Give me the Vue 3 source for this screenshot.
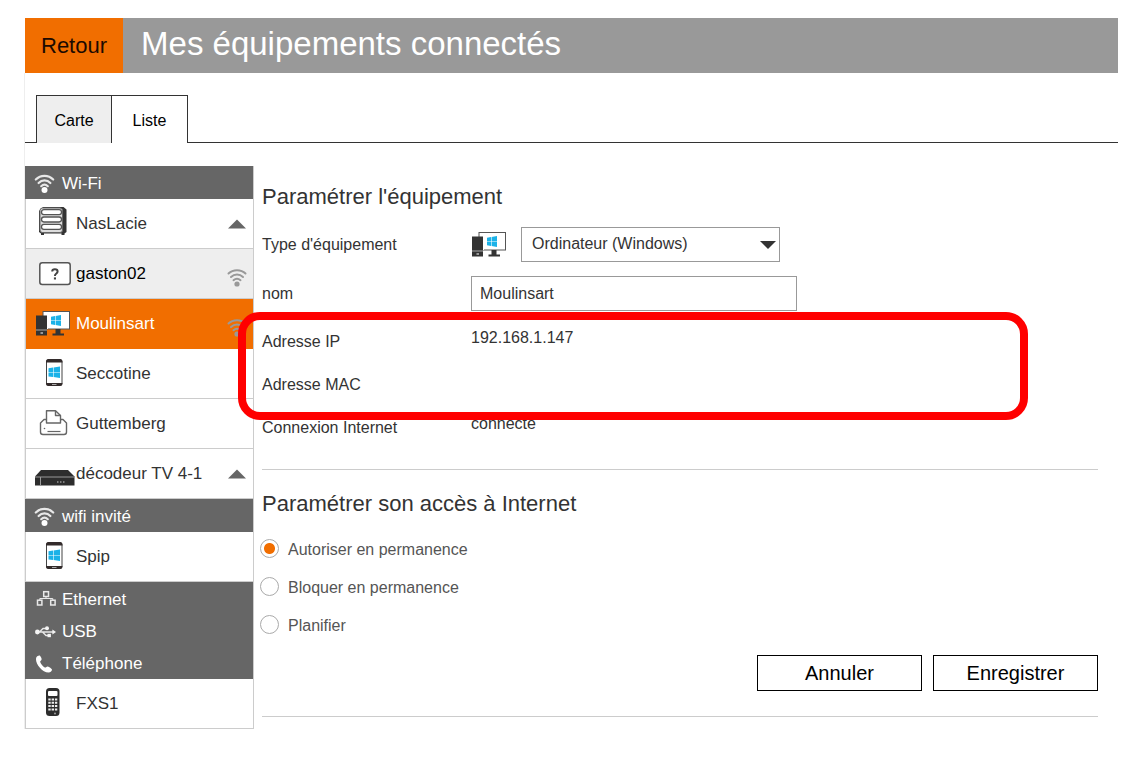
<script setup>
import { ref } from 'vue'

const groups = [
  { label: 'Wi-Fi', icon: 'wifi', items: [
    { name: 'NasLacie', icon: 'nas', trail: 'up' },
    { name: 'gaston02', icon: 'unknown', trail: 'signal', shaded: true },
    { name: 'Moulinsart', icon: 'desktop', trail: 'signal', selected: true },
    { name: 'Seccotine', icon: 'mobile' },
    { name: 'Guttemberg', icon: 'printer' },
    { name: 'décodeur TV 4-1', icon: 'decoder', trail: 'up' },
  ] },
  { label: 'wifi invité', icon: 'wifi', items: [{ name: 'Spip', icon: 'mobile' }] },
  { label: 'Ethernet', icon: 'ethernet', items: [] },
  { label: 'USB', icon: 'usb', items: [] },
  { label: 'Téléphone', icon: 'handset', items: [{ name: 'FXS1', icon: 'cordless' }] },
]

const rows = groups.flatMap((g) => [{ section: true, name: g.label, icon: g.icon }, ...g.items])

const accessModes = ['Autoriser en permanence', 'Bloquer en permanence', 'Planifier']
const access = ref(accessModes[0])
const deviceName = ref('Moulinsart')
const deviceType = ref('windows')
</script>

<template>
  <div class="page">
    <svg class="defs" width="0" height="0" aria-hidden="true">
      <symbol id="wifi" viewBox="0 0 22 20">
        <g fill="none" stroke="#e8e8e8" stroke-width="2.2" stroke-linecap="round">
          <path d="M1.8 5.5C6.6 0.6 14.4 0.6 19.2 5.5" />
          <path d="M4.6 9C8 5.4 13 5.4 16.4 9" />
          <path d="M7.2 12.2C9.2 10.2 11.8 10.2 13.8 12.2" />
        </g>
        <circle cx="10.5" cy="16" r="3" fill="#fff" />
      </symbol>
      <symbol id="ethernet" viewBox="0 0 22 20">
        <g fill="none" stroke="#e8e8e8" stroke-width="1.5">
          <rect x="9.7" y="1.7" width="4.8" height="4.8" />
          <rect x="3.5" y="10.2" width="4.4" height="4.8" />
          <rect x="16.7" y="10.2" width="4.4" height="4.8" />
          <path d="M12 6.5V8.500M5.800 10.200V8.500H18.800V10.200" stroke-width="1" />
        </g>
      </symbol>
      <symbol id="usb" viewBox="0 0 22 20">
        <g fill="none" stroke="#e8e8e8" stroke-width="1.4">
          <path d="M3 10H19M5.5 10L9 6.5H12M8.5 10L12 13.5H14.5" />
        </g>
        <g fill="#f4f4f4">
          <circle cx="3.4" cy="10" r="2.4" />
          <circle cx="13" cy="6.3" r="2" />
          <rect x="13.5" y="11.8" width="3.4" height="3.4" />
          <path d="M18.4 7.600L22 10L18.4 12.400Z" />
        </g>
      </symbol>
      <symbol id="handset" viewBox="0 0 22 20">
        <path fill="#fff" d="M2.4 3.2C3.4 1.8 5 1 5.8 1.6C6.8 2.6 7.8 4.6 7.6 5.6C7.4 6.6 6 7 6.2 8C6.8 10 8.8 12.4 10.8 13.4C12 13.8 12.6 12.2 13.8 12.4C15.2 12.6 17.6 14.4 18 15.4C18.2 16.6 16.4 18.4 14.6 18.6C8.4 18.4 1.8 10.4 2 5.2C2 4.4 2.1 3.7 2.4 3.2Z" />
      </symbol>
      <symbol id="nas" viewBox="0 0 40 36">
        <path fill="#333" d="M8 1H28.5L31.5 3.5V26L29.5 27.5V29H26.5V27.5H9V29H6V27.5L4 26V5Z" />
        <rect x="5" y="2" width="22.5" height="24.5" rx="2.5" fill="#ddd" stroke="#666" />
        <g fill="#fff" stroke="#555" stroke-width="1.3">
          <rect x="6.5" y="3.6" width="20" height="5" rx="2.4" />
          <rect x="6.5" y="11" width="20" height="5" rx="2.4" />
          <rect x="6.5" y="18.4" width="20" height="5" rx="2.4" />
        </g>
      </symbol>
      <symbol id="unknown" viewBox="0 0 40 36">
        <rect x="4.8" y="6.8" width="30.4" height="21.6" rx="2.5" fill="#fff" stroke="#555" stroke-width="1.5" />
        <path d="M17.2 15.6C17.2 12.6 22.6 12.6 22.6 15.6C22.6 17.6 19.9 17.4 19.9 20" fill="none" stroke="#444" stroke-width="2" />
        <rect x="18.9" y="21.4" width="2.1" height="2.1" fill="#444" />
      </symbol>
      <symbol id="desktop" viewBox="0 0 40 36">
        <rect x="8" y="5.5" width="26.5" height="17.5" fill="#fff" stroke="#555" />
        <path d="M20.5 23H25.5V27.5H29V29.5H17.5V27.5H20.5Z" fill="#333" />
        <rect x="1" y="9.5" width="11" height="20" fill="#333" />
        <path d="M1 24H12" stroke="#aaa" />
        <path d="M12.5 9.5V23" stroke="#fff" />
        <path d="M5.5 27H8" stroke="#bbb" stroke-width="1.5" />
        <path fill="#1bb2e8" d="M16 10.8L20 10V14H16ZM20.6 9.9L26 9V14H20.6ZM16 14.6H20V19L16 18.3ZM20.6 14.6H26V20L20.6 19.1Z" />
      </symbol>
      <symbol id="mobile" viewBox="0 0 40 36">
        <rect x="11.5" y="3.5" width="15.5" height="26" rx="2.5" fill="#fff" stroke="#444" />
        <path fill="#332b2b" d="M11 6.500V5.500Q11 3 13.500 3H25Q27.500 3 27.500 5.500V6.500ZM11 27H27.500V27.500Q27.500 30 25 30H13.500Q11 30 11 27.500Z" />
        <path d="M17 28.500H21.500" stroke="#aaa" />
        <path fill="#1bb2e8" d="M13.500 12.300L18 11.600V16H13.500ZM18.600 11.500L25 10.500V16H18.600ZM13.500 16.600H18V21L13.500 20.400ZM18.600 16.600H25V22L18.600 21.100Z" />
      </symbol>
      <symbol id="printer" viewBox="0 0 40 36">
        <g fill="#fff" stroke="#666" stroke-width="1.4" stroke-linejoin="round">
          <path d="M9 13.500H28L31.500 17V26Q31.500 28.500 29 28.500H8Q5.500 28.500 5.500 26V17Z" />
          <path d="M11.500 17V4.700H20.500L25.500 9.500V17Z" />
          <path d="M20.500 4.700V9.500H25.500" fill="none" />
          <path d="M12.500 25.500H25.500" stroke-width="1.200" />
        </g>
        <circle cx="9.500" cy="22.500" r="0.800" fill="#666" />
      </symbol>
      <symbol id="decoder" viewBox="0 0 40 36">
        <path fill="#2d2d2d" d="M6 14H33L39.500 20.500V29.500H0V20.500Z" />
        <path d="M0 21H40M5.500 21V29" stroke="#999" />
        <path d="M22 26H23.500M25 26H26.500M28 26H29.500" stroke="#ccc" />
      </symbol>
      <symbol id="cordless" viewBox="0 0 40 36">
        <rect x="11" y="2" width="13.500" height="28" rx="3.500" fill="#2d2d2d" />
        <rect x="13" y="5" width="9.500" height="5" rx="1" fill="#fff" />
        <path d="M13.300 13.500H22.300M13.300 16.800H22.300M13.300 20.100H22.300M13.300 23.400H22.300" stroke="#eee" stroke-width="2" stroke-dasharray="2.400 0.900" />
        <circle cx="20" cy="27.500" r="0.900" fill="#aaa" />
      </symbol>
      <symbol id="up" viewBox="0 0 20 30">
        <path d="M1 19.500L10 10.500L19 19.500Z" fill="#666" />
      </symbol>
      <symbol id="signal" viewBox="0 0 20 30">
        <g fill="none" stroke="#999" stroke-width="2" stroke-linecap="round">
          <path d="M1.500 14.500C6 10 14 10 18.500 14.500" />
          <path d="M4 18C7.400 14.800 12.600 14.800 16 18" />
          <path d="M6.500 21.200C8.600 19.400 11.400 19.400 13.500 21.200" />
        </g>
        <circle cx="10" cy="25" r="2.600" fill="#999" />
      </symbol>
    </svg>

    <header class="banner">
      <button type="button" class="back">Retour</button>
      <h1>Mes équipements connectés</h1>
    </header>

    <div class="body">
      <nav class="tabs">
        <a href="#carte" class="tab">Carte</a>
        <a href="#liste" class="tab active" aria-current="page">Liste</a>
      </nav>

      <div class="columns">
        <ul class="devices">
          <li v-for="row in rows" :key="row.name" :class="{ section: row.section, device: !row.section }">
            <template v-if="row.section">
              <svg class="section-icon" aria-hidden="true"><use :href="'#' + row.icon" /></svg>
              <span>{{ row.name }}</span>
            </template>
            <button v-else type="button" :class="{ shaded: row.shaded, selected: row.selected }">
              <svg class="device-icon" aria-hidden="true"><use :href="'#' + row.icon" /></svg>
              <span class="device-name">{{ row.name }}</span>
              <svg v-if="row.trail" class="trail" aria-hidden="true"><use :href="'#' + row.trail" /></svg>
            </button>
          </li>
        </ul>

        <main class="settings">
          <h2>Paramétrer l'équipement</h2>
          <div class="row tall">
            <label for="type">Type d'équipement</label>
            <div class="type">
              <svg class="device-icon" aria-hidden="true"><use href="#desktop" /></svg>
              <div class="select">
                <select id="type" v-model="deviceType">
                  <option value="windows">Ordinateur (Windows)</option>
                </select>
                <svg class="caret" viewBox="0 0 16 8" aria-hidden="true"><path d="M0 0H16L8 8Z" fill="#333" /></svg>
              </div>
            </div>
          </div>
          <div class="row tall">
            <label for="nom">nom</label>
            <input id="nom" v-model="deviceName" class="name" type="text" />
          </div>
          <div class="addresses">
            <div class="row"><span>Adresse IP</span><span class="value">192.168.1.147</span></div>
            <div class="row"><span>Adresse MAC</span></div>
            <div class="highlight"></div>
          </div>
          <div class="row"><span>Connexion Internet</span><span class="value">connecté</span></div>
          <hr />

          <h2 id="access-title">Paramétrer son accès à Internet</h2>
          <div class="modes" role="radiogroup" aria-labelledby="access-title">
            <label v-for="mode in accessModes" :key="mode" class="mode">
              <input v-model="access" type="radio" name="access" :value="mode" />
              <span>{{ mode }}</span>
            </label>
          </div>
          <div class="actions">
            <button type="button">Annuler</button>
            <button type="button">Enregistrer</button>
          </div>
          <hr class="end" />
        </main>
      </div>
    </div>
  </div>
</template>

<style>
body {
  background: #fff;
}
</style>

<style scoped>
.page {
  padding: 18px 13px 40px 24px;
  font: 16px/20px "Liberation Sans", Arial, sans-serif;
  color: #333;
}
.page *,
.page *::before,
.page *::after {
  box-sizing: border-box;
}
.defs {
  position: absolute;
}
button,
input,
select {
  font: inherit;
  color: inherit;
  margin: 0;
  border-radius: 0;
}
.banner {
  display: flex;
  height: 55px;
  margin-left: 1px;
  background: #999;
}
.back {
  padding: 0 16px;
  border: 0;
  background: #f16e00;
  color: #1c0a00;
  font-size: 22px;
}
h1 {
  margin: 0;
  padding: 0 18px 4px;
  align-self: center;
  font-size: 33px;
  line-height: 40px;
  font-weight: 400;
  color: #fff;
}
.body {
  padding-top: 22px;
  border-left: 1px solid #eee;
}
.tabs {
  display: flex;
}
.tabs::before,
.tabs::after {
  content: "";
  width: 11px;
  border-bottom: 1px solid #333;
}
.tabs::after {
  flex: 1;
}
.tab {
  width: 75px;
  height: 48px;
  padding-top: 2px;
  border: 1px solid #333;
  border-width: 1px 0 0 1px;
  background: #eee;
  color: #000;
  line-height: 46px;
  text-align: center;
  text-decoration: none;
}
.tab.active {
  width: 77px;
  border-right-width: 1px;
  background: #fff;
}
.columns {
  display: flex;
  align-items: flex-start;
  padding-top: 23px;
}
.devices {
  flex: none;
  width: 229px;
  margin: 0;
  padding: 0;
  border: 1px solid #ccc;
  border-width: 0 1px 0 0;
  list-style: none;
  font-size: 17px;
}
.section {
  display: flex;
  align-items: center;
  gap: 6px;
  height: 33px;
  padding: 2px 0 0 9px;
  background: #666;
  color: #fff;
}
.section + .section {
  height: 32px;
}
.section-icon {
  width: 22px;
  height: 20px;
}
.device {
  height: 50px;
  border: 1px solid #ccc;
  border-width: 0 0 1px 1px;
}
.device button {
  display: flex;
  align-items: center;
  gap: 1px;
  width: 100%;
  height: 49px;
  padding: 0 6px 0 9px;
  border: 0;
  background: #fff;
  text-align: left;
}
.device button.shaded {
  background: #eee;
  color: #000;
}
.device button.selected {
  height: 50px;
  background: #f16e00;
  color: #fff;
}
.device-icon {
  flex: none;
  width: 40px;
  height: 36px;
}
.device-name {
  flex: 1;
}
.trail {
  width: 20px;
  height: 30px;
}
.settings {
  flex: 1;
  min-width: 0;
  padding: 17px 20px 0 8px;
}
h2 {
  margin: 0 0 9px;
  font-size: 22px;
  line-height: 28px;
  font-weight: 400;
  color: #333;
}
.row {
  display: grid;
  grid-template-columns: 209px 1fr;
  align-items: center;
  height: 43px;
}
.row.tall {
  height: 49px;
}
.value {
  padding-bottom: 7px;
}
.type {
  display: flex;
  gap: 10px;
}
.select {
  position: relative;
  flex: 0 1 259px;
}
select,
.name {
  width: 100%;
  height: 35px;
  border: 1px solid #999;
  background: #fff;
}
select {
  display: block;
  padding: 0 30px 0 10px;
  appearance: none;
}
.name {
  max-width: 326px;
  padding: 0 8px;
}
.caret {
  position: absolute;
  top: 14px;
  right: 4px;
  width: 16px;
  height: 8px;
  pointer-events: none;
}
.addresses {
  position: relative;
  margin-top: 2px;
}
.highlight {
  position: absolute;
  inset: -8px 70px -14px -24px;
  border: 8px solid #f00;
  border-radius: 22px;
  pointer-events: none;
}
hr {
  height: 1px;
  margin: 20px 0;
  border: 0;
  background: #ccc;
}
.end {
  margin: 0;
}
.modes {
  margin-left: -2px;
  padding-top: 2px;
}
.mode {
  display: flex;
  align-items: center;
  gap: 9px;
  height: 38px;
  color: #555;
}
.mode span {
  padding-top: 4px;
}
.mode input {
  width: 19px;
  height: 19px;
  border: 1px solid #aaa;
  border-radius: 50%;
  background: #fff;
  appearance: none;
}
.mode input:checked {
  background: radial-gradient(circle, #f16e00 5px, #fff 6px);
}
.actions {
  display: flex;
  justify-content: flex-end;
  gap: 11px;
  margin: 12px 0 25px;
}
.actions button {
  width: 165px;
  height: 36px;
  border: 1px solid #000;
  background: #fff;
  color: #000;
  font-size: 20px;
}
</style>
